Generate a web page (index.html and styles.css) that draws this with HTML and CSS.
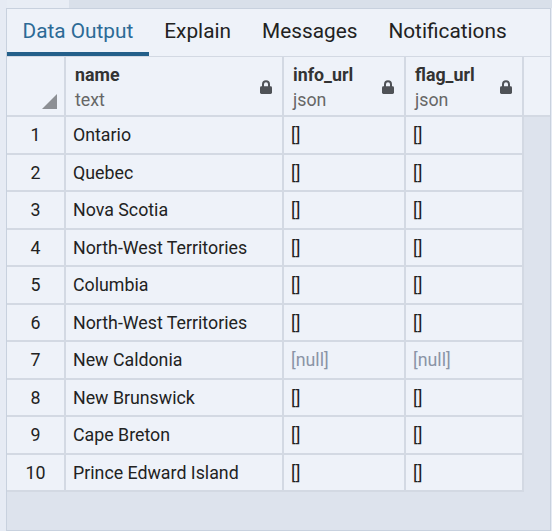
FILE: index.html
```html
<!DOCTYPE html>
<html>
<head>
<meta charset="utf-8">
<link rel="stylesheet" href="styles.css">
</head>
<body>
<div class="topstrip"><div class="topseg"></div></div>
<div class="panel">
  <div class="tabs">
    <div class="tab active">Data Output</div>
    <div class="tab">Explain</div>
    <div class="tab">Messages</div>
    <div class="tab">Notifications</div>
  </div>
  <div class="grid">
    <div class="row head">
      <div class="cell num-h"><span class="sort"></span></div>
      <div class="cell hcell"><div class="hlabel"><b>name</b><span>text</span></div><svg class="lock" viewBox="0 0 12 14"><path d="M3 7V4.3a3 3 0 0 1 6 0V7" fill="none" stroke="#4f5257" stroke-width="2"/><rect x="0" y="6.2" width="12" height="7.8" rx="1.4" fill="#4f5257"/></svg></div>
      <div class="cell hcell"><div class="hlabel"><b>info_url</b><span>json</span></div><svg class="lock" viewBox="0 0 12 14"><path d="M3 7V4.3a3 3 0 0 1 6 0V7" fill="none" stroke="#4f5257" stroke-width="2"/><rect x="0" y="6.2" width="12" height="7.8" rx="1.4" fill="#4f5257"/></svg></div>
      <div class="cell hcell"><div class="hlabel"><b>flag_url</b><span>json</span></div><svg class="lock" viewBox="0 0 12 14"><path d="M3 7V4.3a3 3 0 0 1 6 0V7" fill="none" stroke="#4f5257" stroke-width="2"/><rect x="0" y="6.2" width="12" height="7.8" rx="1.4" fill="#4f5257"/></svg></div>
    </div>
    <div class="row"><div class="cell num">1</div><div class="cell">Ontario</div><div class="cell">[]</div><div class="cell">[]</div></div>
    <div class="row"><div class="cell num">2</div><div class="cell">Quebec</div><div class="cell">[]</div><div class="cell">[]</div></div>
    <div class="row"><div class="cell num">3</div><div class="cell">Nova Scotia</div><div class="cell">[]</div><div class="cell">[]</div></div>
    <div class="row"><div class="cell num">4</div><div class="cell">North-West Territories</div><div class="cell">[]</div><div class="cell">[]</div></div>
    <div class="row"><div class="cell num">5</div><div class="cell">Columbia</div><div class="cell">[]</div><div class="cell">[]</div></div>
    <div class="row"><div class="cell num">6</div><div class="cell">North-West Territories</div><div class="cell">[]</div><div class="cell">[]</div></div>
    <div class="row"><div class="cell num">7</div><div class="cell">New Caldonia</div><div class="cell null">[null]</div><div class="cell null">[null]</div></div>
    <div class="row"><div class="cell num">8</div><div class="cell">New Brunswick</div><div class="cell">[]</div><div class="cell">[]</div></div>
    <div class="row"><div class="cell num">9</div><div class="cell">Cape Breton</div><div class="cell">[]</div><div class="cell">[]</div></div>
    <div class="row"><div class="cell num">10</div><div class="cell">Prince Edward Island</div><div class="cell">[]</div><div class="cell">[]</div></div>
  </div>
</div>
</body>
</html>
```
FILE: styles.css
```css
html, body {
  margin: 0;
  padding: 0;
}
body {
  width: 552px;
  height: 531px;
  background: #e6ebf4;
  font-family: Roboto, "Liberation Sans", sans-serif;
  color: #222;
  overflow: hidden;
}
.topstrip {
  height: 8px;
  margin-left: 7px;
  background: #d9e0ea;
}
.topseg {
  width: 62px;
  height: 8px;
  background: #e8edf5;
}
.panel {
  margin-left: 6px;
  width: 545px;
  height: 523px;
  box-sizing: border-box;
  border: 1px solid #c8d1de;
  background: #dde3ed;
  display: flex;
  flex-direction: column;
}
.tabs {
  display: flex;
  height: 48px;
  box-sizing: border-box;
  border-bottom: 1px solid #d3d9e3;
  background: #eef2f9;
  align-items: stretch;
}
.tab {
  padding: 1px 15.5px 0 15.5px;
  font-size: 20.8px;
  line-height: 42px;
  border-bottom: 4px solid transparent;
  color: #222;
}
.tab.active {
  color: #2c6a96;
  border-bottom-color: #235f8a;
}
.grid {
  display: flex;
  flex-direction: column;
}
.row {
  display: grid;
  grid-template-columns: 59px 218px 122px 118px;
  height: 37.5px;
}
.row.head {
  height: 60px;
  background: #eef2f9;
  border-bottom: 2px solid #d3d9e3;
  box-sizing: border-box;
}
.cell {
  box-sizing: border-box;
  background: #eef2f9;
  border-right: 2px solid #d3d9e3;
  border-bottom: 2px solid #d3d9e3;
  font-size: 17.8px;
  padding-left: 7px;
  display: flex;
  align-items: center;
  white-space: nowrap;
}
.head .cell {
  border-bottom: none;
}
.cell.num {
  justify-content: center;
  padding-left: 0;
}
.cell.null {
  color: #8a94a6;
}
.num-h {
  position: relative;
}
.sort {
  position: absolute;
  right: 7px;
  bottom: 6px;
  width: 0;
  height: 0;
  border-left: 15px solid transparent;
  border-bottom: 15px solid #8c8f94;
}
.hcell {
  padding-left: 9px;
  padding-right: 10px;
  justify-content: space-between;
}
.hlabel {
  display: flex;
  flex-direction: column;
  line-height: 25px;
  padding-top: 1px;
}
.hlabel b {
  font-weight: 700;
  color: #333;
}
.hlabel span {
  color: #666;
}
.lock {
  width: 12px;
  height: 14px;
  flex-shrink: 0;
  margin-top: 2px;
}
```
